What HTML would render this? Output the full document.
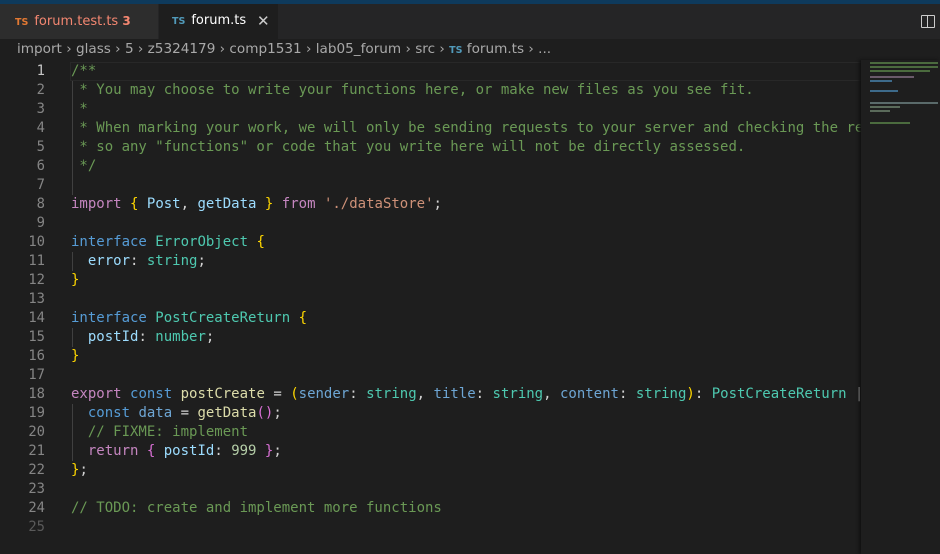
<!DOCTYPE html><html><head><style>
body{margin:0;width:940px;height:554px;background:#1e1e1e;overflow:hidden;font-family:"DejaVu Sans","Liberation Sans",sans-serif;position:relative}
.top{position:absolute;left:0;top:0;width:940px;height:4px;background:#0e3a5c}
.tabs{position:absolute;top:4px;left:0;width:940px;height:35px;background:#252526}
.tab{position:absolute;top:0;height:35px;line-height:34px;font-size:13px}
.ts{font-size:9.5px;font-weight:bold;margin-right:6px}
.bc{position:absolute;top:38px;left:17px;height:22px;line-height:22px;font-size:13.6px;color:#a9a9a9;white-space:pre}
.ed{position:absolute;left:0;top:62px;width:861px;height:492px;overflow:hidden;font-family:"DejaVu Sans Mono","Liberation Mono",monospace;font-size:14px}
.l{height:19px;line-height:19px;white-space:pre;position:relative}
.n{position:absolute;left:0;width:45px;text-align:right;color:#858585;font-size:13.85px}
.c{position:absolute;left:71px;color:#d4d4d4}
.cm{color:#6a9955}.k{color:#c586c0}.b{color:#569cd6}.t{color:#4ec9b0}.v{color:#9cdcfe}.f{color:#dcdcaa}.s{color:#ce9178}.nu{color:#b5cea8}.y{color:#ffd700}.p{color:#da70d6}.pa{color:#6ea6d4}
.g{position:absolute;left:72px;width:1px;background:#404040}
.mm{position:absolute;left:861px;top:60px;width:79px;height:494px;background:#1e1e1e;box-shadow:-2px 0 3px #111}
</style></head><body>
<div class="top"></div>
<div class="tabs">
<div class="tab" style="left:0;width:158px;background:#2d2d2d"><span style="margin-left:15px;color:#e37933" class="ts">TS</span><span style="color:#f48771">forum.test.ts</span> <b style="color:#f48771;font-size:12px">3</b></div>
<div class="tab" style="left:159px;width:119px;background:#1e1e1e"><span style="margin-left:13px;color:#519aba" class="ts">TS</span><span style="color:#fff">forum.ts</span><span style="color:#ccc;position:absolute;left:98px;font-size:15px">✕</span></div>
<div style="position:absolute;left:921px;top:11px;width:12px;height:11px;border:1px solid #ccc;border-radius:1px"><div style="position:absolute;left:5px;top:0;width:1px;height:11px;background:#ccc"></div></div>
</div>
<div class="bc">import › glass › 5 › z5324179 › comp1531 › lab05_forum › src › <span style="color:#519aba;font-size:9.5px;font-weight:bold">TS</span> forum.ts › ...</div>
<div class="ed">
<div style="position:absolute;left:70px;top:0;width:791px;height:17px;border:1px solid #282828"></div>
<div class="g" style="top:19px;height:114px"></div>
<div class="g" style="top:190px;height:19px"></div>
<div class="g" style="top:266px;height:19px"></div>
<div class="g" style="top:342px;height:57px"></div>
<div class="l"><span class="n" style="color:#c6c6c6">1</span><span class="c cm">/**</span></div>
<div class="l"><span class="n">2</span><span class="c cm"> * You may choose to write your functions here, or make new files as you see fit.</span></div>
<div class="l"><span class="n">3</span><span class="c cm"> *</span></div>
<div class="l"><span class="n">4</span><span class="c cm"> * When marking your work, we will only be sending requests to your server and checking the results.</span></div>
<div class="l"><span class="n">5</span><span class="c cm"> * so any "functions" or code that you write here will not be directly assessed.</span></div>
<div class="l"><span class="n">6</span><span class="c cm"> */</span></div>
<div class="l"><span class="n">7</span></div>
<div class="l"><span class="n">8</span><span class="c"><span class="k">import</span> <span class="y">{</span> <span class="v">Post</span>, <span class="v">getData</span> <span class="y">}</span> <span class="k">from</span> <span class="s">'./dataStore'</span>;</span></div>
<div class="l"><span class="n">9</span></div>
<div class="l"><span class="n">10</span><span class="c"><span class="b">interface</span> <span class="t">ErrorObject</span> <span class="y">{</span></span></div>
<div class="l"><span class="n">11</span><span class="c">  <span class="v">error</span>: <span class="t">string</span>;</span></div>
<div class="l"><span class="n">12</span><span class="c"><span class="y">}</span></span></div>
<div class="l"><span class="n">13</span></div>
<div class="l"><span class="n">14</span><span class="c"><span class="b">interface</span> <span class="t">PostCreateReturn</span> <span class="y">{</span></span></div>
<div class="l"><span class="n">15</span><span class="c">  <span class="v">postId</span>: <span class="t">number</span>;</span></div>
<div class="l"><span class="n">16</span><span class="c"><span class="y">}</span></span></div>
<div class="l"><span class="n">17</span></div>
<div class="l"><span class="n">18</span><span class="c"><span class="k">export</span> <span class="b">const</span> <span class="f">postCreate</span> = <span class="y">(</span><span class="pa">sender</span>: <span class="t">string</span>, <span class="pa">title</span>: <span class="t">string</span>, <span class="pa">content</span>: <span class="t">string</span><span class="y">)</span>: <span class="t">PostCreateReturn</span> | <span class="t">ErrorObject</span> =&gt; {</span></div>
<div class="l"><span class="n">19</span><span class="c">  <span class="b">const</span> <span class="pa">data</span> = <span class="f">getData</span><span class="p">()</span>;</span></div>
<div class="l"><span class="n">20</span><span class="c">  <span class="cm">// FIXME: implement</span></span></div>
<div class="l"><span class="n">21</span><span class="c">  <span class="k">return</span> <span class="p">{</span> <span class="v">postId</span>: <span class="nu">999</span> <span class="p">}</span>;</span></div>
<div class="l"><span class="n">22</span><span class="c"><span class="y">}</span>;</span></div>
<div class="l"><span class="n">23</span></div>
<div class="l"><span class="n">24</span><span class="c cm">// TODO: create and implement more functions</span></div>
<div class="l"><span class="n" style="color:#5a5a5a">25</span></div>
</div>
<div class="mm">
<div style="position:absolute;left:9px;top:2px;width:68px;height:2px;background:#4b6b3e"></div>
<div style="position:absolute;left:9px;top:6px;width:68px;height:2px;background:#4b6b3e"></div>
<div style="position:absolute;left:9px;top:10px;width:60px;height:2px;background:#4b6b3e"></div>
<div style="position:absolute;left:9px;top:16px;width:44px;height:2px;background:#6a5a6a"></div>
<div style="position:absolute;left:9px;top:20px;width:22px;height:2px;background:#3d6a8a"></div>
<div style="position:absolute;left:9px;top:30px;width:28px;height:2px;background:#3d6a8a"></div>
<div style="position:absolute;left:9px;top:42px;width:68px;height:2px;background:#5a6a6a"></div>
<div style="position:absolute;left:9px;top:46px;width:30px;height:2px;background:#5a6a5a"></div>
<div style="position:absolute;left:9px;top:50px;width:20px;height:2px;background:#5a6a5a"></div>
<div style="position:absolute;left:9px;top:62px;width:40px;height:2px;background:#4b6b3e"></div>
</div>
</body></html>
